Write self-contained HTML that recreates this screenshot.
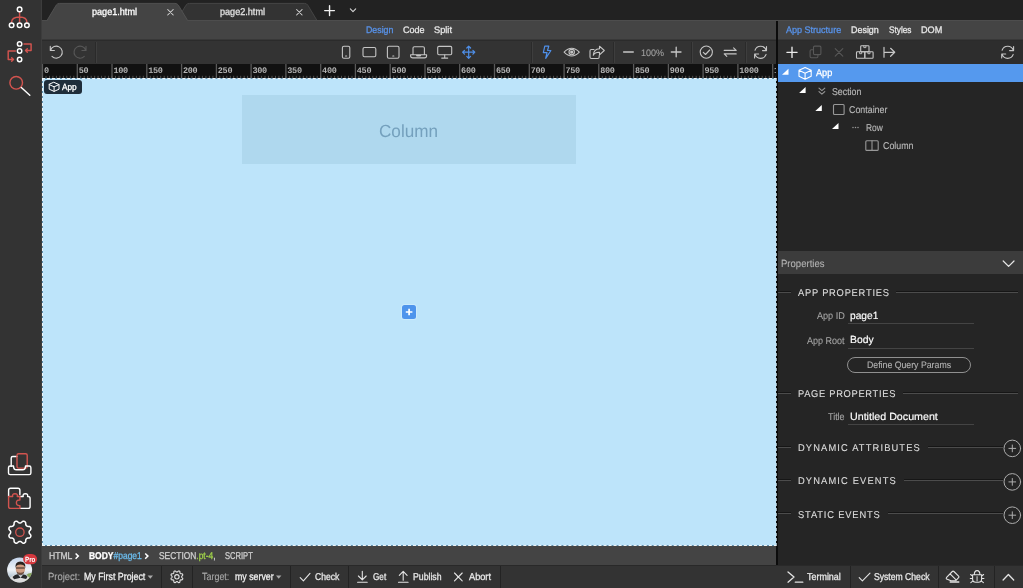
<!DOCTYPE html>
<html><head><meta charset="utf-8"><title>Wappler</title>
<style>
*{box-sizing:border-box;margin:0;padding:0}
html,body{width:1023px;height:588px;overflow:hidden;background:#333}
body{position:relative;font-family:"Liberation Sans",sans-serif;font-size:10.5px;color:#ddd;text-rendering:geometricPrecision}
.abs{position:absolute}
.t{position:absolute;white-space:nowrap;transform-origin:0 50%}
#txt{position:absolute;left:0;top:0;width:1023px;height:588px;will-change:transform}
svg{position:absolute;overflow:visible;fill:none;stroke-linecap:round;stroke-linejoin:round}
.sep{position:absolute;width:1px;background:#232323}
.sepl{position:absolute;width:2px;background:linear-gradient(90deg,#2a2a2a 50%,#3e3e3e 50%)}
#sidebar{left:0;top:0;width:42px;height:588px;background:#333;border-right:1px solid #3c3c3c}
#tabstrip{left:42px;top:0;width:981px;height:20px;background:#222}
#viewbar{left:42px;top:20px;width:734px;height:19px;background:#444}
#rviewbar{left:778px;top:20px;width:245px;height:19px;background:#444}
#darkline{left:42px;top:39px;width:981px;height:2px;background:#2b2b2b;border-top:1px solid #383838}
#toolbar{left:42px;top:41px;width:734px;height:23px;background:#333}
#rtoolbar{left:778px;top:41px;width:245px;height:23px;background:#2d2d2d}
#ruler{left:42px;top:64px;width:734px;height:14px;background:#111;overflow:hidden}
#rulern{position:absolute;left:0;top:0;width:734px;height:14px;will-change:transform}
#ruler .n{position:absolute;top:1.5px;font-family:"Liberation Mono",monospace;font-size:8.5px;line-height:10px;color:#b4b4b4;letter-spacing:-0.3px;font-weight:700}
#canvas{left:42px;top:78px;width:735px;height:468px;background:#bde4fa;border:1px solid #5f8fad}
#canvas2{left:42px;top:78px;width:735px;height:468px;border:1px dashed rgba(255,255,255,.9);border-right-color:rgba(205,228,242,.75)}
#crumbs{left:42px;top:546px;width:735px;height:19px;background:#444}
#bottombar{left:42px;top:565px;width:981px;height:23px;background:#333;border-top:1px solid #292929}
#rpanel{left:778px;top:64px;width:245px;height:501px;background:#252525}
#vsplit{left:776px;top:20px;width:2px;height:545px;background:#0c0c0c}
#selrow{left:778px;top:64px;width:245px;height:18px;background:#5599ee}
#prophead{left:778px;top:251px;width:245px;height:23px;background:#3c3c3c}
.hl{position:absolute;height:2px;background:linear-gradient(180deg,#161616 50%,#4c4c4c 50%)}
.ul{position:absolute;height:1px;background:#444}
#qbtn{left:847px;top:357px;width:124px;height:16px;border:1px solid #909090;border-radius:8px}
#appbadge{left:44px;top:80px;width:38px;height:14px;background:#1f2d3a;border-radius:3px}
#colbox{left:242px;top:95px;width:334px;height:69px;background:#afd8ee}
#plusbtn{left:402px;top:305px;width:14px;height:14px;background:#4e94ec;border-radius:2.500px;box-shadow:0 0 0 1px rgba(225,244,255,.45)}
</style></head><body>
<div class="abs" id="sidebar"></div>
<div class="abs" id="tabstrip"></div>
<div class="abs" id="viewbar"></div>
<div class="abs" id="rviewbar"></div>
<div class="abs" id="darkline"></div>
<div class="abs" id="toolbar"></div>
<div class="abs" id="rtoolbar"></div>
<div class="abs" id="ruler">
<svg width="734" height="14" viewBox="0 0 734 14" style="left:0;top:0"><line x1="0.5" y1="0" x2="0.5" y2="14" stroke="#5a5a5a" stroke-width="1.3"/><line x1="35.3" y1="0" x2="35.3" y2="14" stroke="#5a5a5a" stroke-width="1.3"/><line x1="70.0" y1="0" x2="70.0" y2="14" stroke="#5a5a5a" stroke-width="1.3"/><line x1="104.8" y1="0" x2="104.8" y2="14" stroke="#5a5a5a" stroke-width="1.3"/><line x1="139.6" y1="0" x2="139.6" y2="14" stroke="#5a5a5a" stroke-width="1.3"/><line x1="174.4" y1="0" x2="174.4" y2="14" stroke="#5a5a5a" stroke-width="1.3"/><line x1="209.1" y1="0" x2="209.1" y2="14" stroke="#5a5a5a" stroke-width="1.3"/><line x1="243.9" y1="0" x2="243.9" y2="14" stroke="#5a5a5a" stroke-width="1.3"/><line x1="278.7" y1="0" x2="278.7" y2="14" stroke="#5a5a5a" stroke-width="1.3"/><line x1="313.4" y1="0" x2="313.4" y2="14" stroke="#5a5a5a" stroke-width="1.3"/><line x1="348.2" y1="0" x2="348.2" y2="14" stroke="#5a5a5a" stroke-width="1.3"/><line x1="383.0" y1="0" x2="383.0" y2="14" stroke="#5a5a5a" stroke-width="1.3"/><line x1="417.7" y1="0" x2="417.7" y2="14" stroke="#5a5a5a" stroke-width="1.3"/><line x1="452.5" y1="0" x2="452.5" y2="14" stroke="#5a5a5a" stroke-width="1.3"/><line x1="487.3" y1="0" x2="487.3" y2="14" stroke="#5a5a5a" stroke-width="1.3"/><line x1="522.1" y1="0" x2="522.1" y2="14" stroke="#5a5a5a" stroke-width="1.3"/><line x1="556.8" y1="0" x2="556.8" y2="14" stroke="#5a5a5a" stroke-width="1.3"/><line x1="591.6" y1="0" x2="591.6" y2="14" stroke="#5a5a5a" stroke-width="1.3"/><line x1="626.4" y1="0" x2="626.4" y2="14" stroke="#5a5a5a" stroke-width="1.3"/><line x1="661.1" y1="0" x2="661.1" y2="14" stroke="#5a5a5a" stroke-width="1.3"/><line x1="695.9" y1="0" x2="695.9" y2="14" stroke="#5a5a5a" stroke-width="1.3"/><line x1="730.7" y1="0" x2="730.7" y2="14" stroke="#5a5a5a" stroke-width="1.3"/><path d="M0.5 11.8V14M4.0 11.8V14M7.5 11.8V14M10.9 11.8V14M14.4 11.8V14M17.9 11.8V14M21.4 11.8V14M24.8 11.8V14M28.3 11.8V14M31.8 11.8V14M35.3 11.8V14M38.7 11.8V14M42.2 11.8V14M45.7 11.8V14M49.2 11.8V14M52.7 11.8V14M56.1 11.8V14M59.6 11.8V14M63.1 11.8V14M66.6 11.8V14M70.0 11.8V14M73.5 11.8V14M77.0 11.8V14M80.5 11.8V14M83.9 11.8V14M87.4 11.8V14M90.9 11.8V14M94.4 11.8V14M97.9 11.8V14M101.3 11.8V14M104.8 11.8V14M108.3 11.8V14M111.8 11.8V14M115.2 11.8V14M118.7 11.8V14M122.2 11.8V14M125.7 11.8V14M129.1 11.8V14M132.6 11.8V14M136.1 11.8V14M139.6 11.8V14M143.1 11.8V14M146.5 11.8V14M150.0 11.8V14M153.5 11.8V14M157.0 11.8V14M160.4 11.8V14M163.9 11.8V14M167.4 11.8V14M170.9 11.8V14M174.4 11.8V14M177.8 11.8V14M181.3 11.8V14M184.8 11.8V14M188.3 11.8V14M191.7 11.8V14M195.2 11.8V14M198.7 11.8V14M202.2 11.8V14M205.6 11.8V14M209.1 11.8V14M212.6 11.8V14M216.1 11.8V14M219.6 11.8V14M223.0 11.8V14M226.5 11.8V14M230.0 11.8V14M233.5 11.8V14M236.9 11.8V14M240.4 11.8V14M243.9 11.8V14M247.4 11.8V14M250.8 11.8V14M254.3 11.8V14M257.8 11.8V14M261.3 11.8V14M264.8 11.8V14M268.2 11.8V14M271.7 11.8V14M275.2 11.8V14M278.7 11.8V14M282.1 11.8V14M285.6 11.8V14M289.1 11.8V14M292.6 11.8V14M296.0 11.8V14M299.5 11.8V14M303.0 11.8V14M306.5 11.8V14M310.0 11.8V14M313.4 11.8V14M316.9 11.8V14M320.4 11.8V14M323.9 11.8V14M327.3 11.8V14M330.8 11.8V14M334.3 11.8V14M337.8 11.8V14M341.2 11.8V14M344.7 11.8V14M348.2 11.8V14M351.7 11.8V14M355.2 11.8V14M358.6 11.8V14M362.1 11.8V14M365.6 11.8V14M369.1 11.8V14M372.5 11.8V14M376.0 11.8V14M379.5 11.8V14M383.0 11.8V14M386.4 11.8V14M389.9 11.8V14M393.4 11.8V14M396.9 11.8V14M400.4 11.8V14M403.8 11.8V14M407.3 11.8V14M410.8 11.8V14M414.3 11.8V14M417.7 11.8V14M421.2 11.8V14M424.7 11.8V14M428.2 11.8V14M431.6 11.8V14M435.1 11.8V14M438.6 11.8V14M442.1 11.8V14M445.6 11.8V14M449.0 11.8V14M452.5 11.8V14M456.0 11.8V14M459.5 11.8V14M462.9 11.8V14M466.4 11.8V14M469.9 11.8V14M473.4 11.8V14M476.8 11.8V14M480.3 11.8V14M483.8 11.8V14M487.3 11.8V14M490.8 11.8V14M494.2 11.8V14M497.7 11.8V14M501.2 11.8V14M504.7 11.8V14M508.1 11.8V14M511.6 11.8V14M515.1 11.8V14M518.6 11.8V14M522.1 11.8V14M525.5 11.8V14M529.0 11.8V14M532.5 11.8V14M536.0 11.8V14M539.4 11.8V14M542.9 11.8V14M546.4 11.8V14M549.9 11.8V14M553.3 11.8V14M556.8 11.8V14M560.3 11.8V14M563.8 11.8V14M567.3 11.8V14M570.7 11.8V14M574.2 11.8V14M577.7 11.8V14M581.2 11.8V14M584.6 11.8V14M588.1 11.8V14M591.6 11.8V14M595.1 11.8V14M598.5 11.8V14M602.0 11.8V14M605.5 11.8V14M609.0 11.8V14M612.5 11.8V14M615.9 11.8V14M619.4 11.8V14M622.9 11.8V14M626.4 11.8V14M629.8 11.8V14M633.3 11.8V14M636.8 11.8V14M640.3 11.8V14M643.7 11.8V14M647.2 11.8V14M650.7 11.8V14M654.2 11.8V14M657.7 11.8V14M661.1 11.8V14M664.6 11.8V14M668.1 11.8V14M671.6 11.8V14M675.0 11.8V14M678.5 11.8V14M682.0 11.8V14M685.5 11.8V14M688.9 11.8V14M692.4 11.8V14M695.9 11.8V14M699.4 11.8V14M702.9 11.8V14M706.3 11.8V14M709.8 11.8V14M713.3 11.8V14M716.8 11.8V14M720.2 11.8V14M723.7 11.8V14M727.2 11.8V14M730.7 11.8V14M734.1 11.8V14M737.6 11.8V14" stroke="#6e6e6e" stroke-width="0.7" stroke-linecap="butt"/></svg>
<div id="rulern"><div class="n" style="left:1.9px">0</div><div class="n" style="left:36.7px">50</div><div class="n" style="left:71.4px">100</div><div class="n" style="left:106.2px">150</div><div class="n" style="left:141.0px">200</div><div class="n" style="left:175.8px">250</div><div class="n" style="left:210.5px">300</div><div class="n" style="left:245.3px">350</div><div class="n" style="left:280.1px">400</div><div class="n" style="left:314.8px">450</div><div class="n" style="left:349.6px">500</div><div class="n" style="left:384.4px">550</div><div class="n" style="left:419.1px">600</div><div class="n" style="left:453.9px">650</div><div class="n" style="left:488.7px">700</div><div class="n" style="left:523.5px">750</div><div class="n" style="left:558.2px">800</div><div class="n" style="left:593.0px">850</div><div class="n" style="left:627.8px">900</div><div class="n" style="left:662.5px">950</div><div class="n" style="left:697.3px">1000</div><div class="n" style="left:732.1px">1050</div></div>
</div>
<div class="abs" id="canvas"></div>
<div class="abs" id="appbadge"></div>
<div class="abs" id="colbox"></div>
<div class="abs" id="plusbtn"></div>
<div class="abs" id="crumbs"></div>
<div class="abs" id="rpanel"></div>
<div class="abs" id="selrow"></div>
<div class="abs" id="prophead"></div>
<div class="abs" id="bottombar"></div>
<div class="abs" id="vsplit"></div>
<div class="abs" id="canvas2"></div>
<!-- toolbar separators -->
<div class="sepl" style="left:95px;top:42px;height:21px"></div>
<div class="sepl" style="left:531px;top:42px;height:21px"></div>
<div class="sepl" style="left:613px;top:42px;height:21px"></div>
<div class="sepl" style="left:691px;top:42px;height:21px"></div>
<div class="sepl" style="left:745px;top:42px;height:21px"></div>
<!-- bottom separators -->
<div class="sep" style="left:161px;top:566px;height:22px"></div>
<div class="sep" style="left:192px;top:566px;height:22px"></div>
<div class="sep" style="left:290px;top:566px;height:22px"></div>
<div class="sep" style="left:348px;top:566px;height:22px"></div>
<div class="sep" style="left:500px;top:566px;height:22px"></div>
<div class="sep" style="left:850px;top:566px;height:22px"></div>
<div class="sep" style="left:938px;top:566px;height:22px"></div>
<div class="sep" style="left:994px;top:566px;height:22px"></div>
<!-- property section lines -->
<div class="hl" style="left:778px;top:291px;width:13px"></div><div class="hl" style="left:896px;top:291px;width:122px"></div>
<div class="hl" style="left:778px;top:392px;width:13px"></div><div class="hl" style="left:903px;top:392px;width:115px"></div>
<div class="hl" style="left:778px;top:446px;width:13px"></div><div class="hl" style="left:928px;top:446px;width:75px"></div>
<div class="hl" style="left:778px;top:479px;width:13px"></div><div class="hl" style="left:904px;top:479px;width:99px"></div>
<div class="hl" style="left:778px;top:512px;width:13px"></div><div class="hl" style="left:888px;top:512px;width:115px"></div>
<div class="ul" style="left:848px;top:323px;width:126px"></div>
<div class="ul" style="left:848px;top:348px;width:126px"></div>
<div class="ul" style="left:848px;top:424px;width:126px"></div>
<div class="abs" id="qbtn"></div>
<svg width="1023" height="588" viewBox="0 0 1023 588" style="left:0;top:0">
<!-- tabs -->
<path d="M176.500 20.500L186 5.200Q187.200 3.400 189.500 3.400H304.500Q306.800 3.400 307.800 5.200L317 20.500" fill="#333" stroke="#484848" stroke-width="0.900"/>
<path d="M47 20.500L56.200 5.200Q57.300 3.400 59.600 3.400H175Q177.300 3.400 178.400 5.200L187.600 20.500" fill="#444" stroke="#555" stroke-width="0.900"/>
<rect x="42" y="20" width="981" height="1" fill="#4d4d4d"/><rect x="47.600" y="20" width="139.500" height="1" fill="#444"/>
<g stroke="#d8d8d8" stroke-width="1.050">
<path d="M167.700 9.500l5.500 5.500m0-5.500l-5.500 5.500"/>
<path d="M296.600 9.500l5.500 5.500m0-5.500l-5.500 5.500"/>
<path d="M350.300 8.900l2.700 2.700 2.700-2.700"/>
</g>
<path d="M324.700 10.600h9.700m-4.850-4.850v9.700" stroke="#f0f0f0" stroke-width="1.400"/>

<!-- sidebar icons -->
<g stroke-width="1.450">
 <g stroke="#d2544f">
  <path d="M19.6 12v10M11.6 22.3Q11.6 17 19.6 17Q26.9 17 26.9 22.3"/>
  <path d="M24 43.9h7.1v6.6h-5.6m1.8-1.8l-1.8 1.8 1.8 1.8"/>
  <path d="M15.3 51h-7.1v8.5h5.3m-1.8-1.8l1.8 1.8-1.8 1.8"/>
  <circle cx="16.2" cy="82.8" r="6.3"/>
 </g>
 <g stroke="#fff">
  <circle cx="19.6" cy="9.4" r="2.3"/><circle cx="11.6" cy="25.2" r="2.3"/><circle cx="19.6" cy="25.2" r="2.3"/><circle cx="26.9" cy="25.2" r="2.3"/>
  <circle cx="19.6" cy="43.9" r="2.2"/><circle cx="19.6" cy="51" r="2.2"/><circle cx="19.6" cy="59.5" r="2.2"/>
  <path d="M21.3 87.5l8.5 7.7"/>
 </g>
</g>

<!-- toolbar icons -->
<g stroke="#c6c6c6" stroke-width="1.1">
 <path d="M50.3 46.4v4.1h4.1M50.6 50.2A6 6 0 1 1 52 56.4"/>
 <rect x="342.4" y="46.2" width="7.4" height="12" rx="1.5"/><path d="M345.6 56h1" stroke-width="1.2"/>
 <rect x="363" y="47.5" width="12.8" height="9.2" rx="1.5"/>
 <rect x="387.4" y="46.2" width="11.6" height="12" rx="1.5"/><path d="M392.8 56h1" stroke-width="1.2"/>
 <path d="M413 54.6V48.1q0-1.4 1.4-1.4h8.6q1.4 0 1.4 1.4v6.5M410.6 54.7h16v1q0 2.2-2.2 2.2h-11.6q-2.2 0-2.2-2.200zM416.5 54.9q0 1 1 1h2.200q1 0 1-1"/>
 <rect x="437.7" y="46.4" width="14" height="8.400" rx="1.2"/><path d="M444.700 55v2.600M441.700 58.100h6"/>
 <path d="M564.100 52.100Q571.700 44.300 579.300 52.100Q571.700 59.900 564.100 52.100Z"/><circle cx="571.700" cy="52.100" r="2.700"/><circle cx="571.700" cy="52.100" r="1" fill="#cfcfcf"/>
 <path d="M594 49.500h-2.600q-1.400 0-1.400 1.400v6.200q0 1.400 1.400 1.400h6.400q1.400 0 1.400-1.400v-1.600"/>
 <path d="M599.500 46.200l4.800 4.300-4.800 4.300v-2.600q-4.600-.2-6.200 3 .2-6.200 6.200-6.500z"/>
 <path d="M623.600 52h9.700M671.300 52h9.700M676.200 47.200v9.600" stroke-width="1.300"/>
 <circle cx="706.300" cy="52.100" r="6.100"/><path d="M703.300 52.300l2.200 2.200 4.200-4.500"/>
 <path d="M724.200 50.400h12l-2.600-2.500M736.200 53.900h-12l2.600 2.500"/>
 <path d="M766.500 46.600v4h-4M766.200 50.400A5.900 5.900 0 0 0 755 50.200M754.600 58v-4h4M754.900 54.200A5.900 5.900 0 0 0 766.100 54.400"/>
 <path d="M1013.600 46.600v4h-4M1013.300 50.400A5.900 5.900 0 0 0 1002.100 50.200M1001.700 58v-4h4M1002 54.200A5.900 5.900 0 0 0 1013.200 54.400"/>
 <rect x="856.500" y="51.800" width="8.300" height="6.500" rx="0.800"/><rect x="864.800" y="51.800" width="8.300" height="6.500" rx="0.800"/><rect x="860.700" y="45.700" width="8.300" height="6.100" rx="0.800"/>
 <path d="M863.800 45.900v1.700h2.100v-1.700M859.600 52v1.700h2.100v-1.700M867.900 52v1.700h2.100v-1.700" stroke-width="0.900"/>
 <path d="M884 47.400v9.800M885 52.300h9.600M890.600 48.300l4.100 4-4.100 4" stroke-width="1.200"/>
</g>
<path d="M786.900 52.300h10.200M792 47.200v10.200" stroke="#ececec" stroke-width="1.350"/>
<g stroke="#585858" stroke-width="1.100">
 <path d="M86 46.400v4.100h-4.100M85.700 50.200A6 6 0 1 0 84.300 56.400"/>
 <path d="M813.300 49.700h-2q-1.200 0-1.200 1.200v5.600q0 1.200 1.200 1.200h5.400q1.200 0 1.200-1.200v-1.700"/>
 <rect x="813.500" y="46.100" width="7.400" height="8.500" rx="1.200"/>
 <path d="M835.200 48.600l7.600 7.600M842.800 48.600l-7.600 7.600"/>
</g>
<g stroke="#4f90ea" stroke-width="1.200">
 <path d="M468.700 46.200v12M462.700 52.200h12M466.800 48l1.900-1.900 1.900 1.900M466.800 56.400l1.900 1.900 1.900-1.900M464.500 50.300l-1.900 1.900 1.900 1.900M472.900 50.300l1.900 1.900-1.900 1.900"/>
 <path d="M544.800 46.200h4l-1.300 4.300h3.400l-5.200 7.800 1.300-5.700h-3.700z"/>
</g>

<!-- tree -->
<g fill="#fff" stroke="none">
 <path d="M788.500 68.700v6.100h-6.500z"/><path d="M805.600 87v6.100h-6.500z"/><path d="M821.800 105v6.100h-6.500z"/><path d="M838.500 123v6.100h-6.500z"/>
</g>
<g stroke="#fff" stroke-width="1.100">
 <path d="M805.100 67.400l6.100 2.900v6l-6.100 2.900-6.100-2.900v-6zM799 70.300l6.100 2.900 6.100-2.900M805.100 73.200v6"/>
 <path d="M54.100 82.400l4.900 2.200v4.600l-4.900 2.200-4.900-2.200v-4.600zM49.200 84.600l4.900 2.200 4.900-2.200M54.100 86.800v4.600" stroke-width="1"/>
</g>
<g stroke="#989898" stroke-width="1.100">
 <path d="M819 88.100l2.900 2.600 2.900-2.600M819 91.600l2.900 2.600 2.900-2.600"/>
 <rect x="833.500" y="104.500" width="10.600" height="10" rx="1"/>
 <rect x="865.800" y="140.800" width="12.400" height="9.600" rx="1"/><path d="M872 140.800v9.600"/>
</g>
<g fill="#999" stroke="none"><circle cx="853" cy="127.600" r="0.750"/><circle cx="855.500" cy="127.600" r="0.750"/><circle cx="858" cy="127.600" r="0.750"/></g>
<!-- properties -->
<path d="M1003.200 261l5.400 5.400 5.400-5.400" stroke="#e8e8e8" stroke-width="1.200"/>
<g stroke="#adadad" stroke-width="1">
 <circle cx="1012.300" cy="448.400" r="8.300"/><path d="M1008.900 448.400h6.800M1012.300 445v6.800"/>
 <circle cx="1012.300" cy="481.900" r="8.300"/><path d="M1008.900 481.900h6.800M1012.300 478.500v6.800"/>
 <circle cx="1012.300" cy="515.200" r="8.300"/><path d="M1008.900 515.200h6.800M1012.300 511.800v6.800"/>
</g>
<!-- plus button -->
<path d="M405.800 312h6.600M409.100 308.700v6.600" stroke="#fff" stroke-width="1.700" stroke-linecap="butt"/>
<!-- crumbs chevrons -->
<path d="M75.600 553.500l2.700 2.600-2.700 2.600M145.200 553.500l2.700 2.600-2.700 2.600" stroke="#fff" stroke-width="1.500" stroke-linecap="butt" stroke-linejoin="miter"/>
<!-- bottom bar -->
<g fill="#aaa" stroke="none"><path d="M147.600 575.500h5.400l-2.700 3.200z"/><path d="M276 575.500h5.400l-2.700 3.200z"/></g>
<g stroke="#e4e4e4" stroke-width="1.100">
 <path d="M181.65 576.80L181.68 577.03L181.77 577.28L181.92 577.55L182.29 577.87L182.64 578.24L182.75 578.57L182.75 578.89L182.67 579.19L182.52 579.46L182.29 579.68L181.98 579.84L181.47 579.86L180.98 579.83L180.68 579.90L180.45 580.01L180.26 580.16L180.11 580.35L180.00 580.58L179.93 580.88L179.96 581.37L179.94 581.88L179.78 582.19L179.56 582.42L179.29 582.57L178.99 582.65L178.67 582.65L178.34 582.54L177.97 582.19L177.65 581.82L177.38 581.67L177.13 581.58L176.90 581.55L176.67 581.58L176.42 581.67L176.15 581.82L175.83 582.19L175.46 582.54L175.13 582.65L174.81 582.65L174.51 582.57L174.24 582.42L174.02 582.19L173.86 581.88L173.84 581.37L173.87 580.88L173.80 580.58L173.69 580.35L173.54 580.16L173.35 580.01L173.12 579.90L172.82 579.83L172.33 579.86L171.82 579.84L171.51 579.68L171.28 579.46L171.13 579.19L171.05 578.89L171.05 578.57L171.16 578.24L171.51 577.87L171.88 577.55L172.03 577.28L172.12 577.03L172.15 576.80L172.12 576.57L172.03 576.32L171.88 576.05L171.51 575.73L171.16 575.36L171.05 575.03L171.05 574.71L171.13 574.41L171.28 574.14L171.51 573.92L171.82 573.76L172.33 573.74L172.82 573.77L173.12 573.70L173.35 573.59L173.54 573.44L173.69 573.25L173.80 573.02L173.87 572.72L173.84 572.23L173.86 571.72L174.02 571.41L174.24 571.18L174.51 571.03L174.81 570.95L175.13 570.95L175.46 571.06L175.83 571.41L176.15 571.78L176.42 571.93L176.67 572.02L176.90 572.05L177.13 572.02L177.38 571.93L177.65 571.78L177.97 571.41L178.34 571.06L178.67 570.95L178.99 570.95L179.29 571.03L179.56 571.18L179.78 571.41L179.94 571.72L179.96 572.23L179.93 572.72L180.00 573.02L180.11 573.25L180.26 573.44L180.45 573.59L180.68 573.70L180.98 573.77L181.47 573.74L181.98 573.76L182.29 573.92L182.52 574.14L182.67 574.41L182.75 574.71L182.75 575.03L182.64 575.36L182.29 575.73L181.92 576.05L181.77 576.32L181.68 576.57Z"/><circle cx="176.900" cy="576.800" r="2.200"/>
 <path d="M300.200 577.600l3.200 3.200 6.600-7.400"/>
 <path d="M362.300 571.300v8.400M358.400 576l3.900 3.900 3.900-3.900M357.600 582.300h9.600"/>
 <path d="M403.200 580.200v-8.400M399.300 575.300l3.900-3.900 3.900 3.900M398.500 582.300h9.600"/>
 <path d="M454.500 573l7.700 7.800M462.200 573l-7.700 7.800"/>
 <path d="M788 572l6 5.100-6 5.100M795.300 582.200h7.500" stroke-width="1.300"/>
 <path d="M859.200 577.600l3.200 3.200 7.600-7.700"/>
 <path d="M1003.100 580l5.300-5.500 5.300 5.500" stroke-width="1.300"/>
 <path d="M950.200 582h8.600" stroke-width="1.400"/><path d="M946.600 577.400l5.700-5.900q.8-.8 1.600 0l4.700 4.600q.8.800 0 1.600l-3 3.100h-4.600l-4.400-1.800q-.8-.8 0-1.600zM950.100 573.900l6 5.900"/>
 <path d="M972.600 574.700h9v4.300q0 3.300-3.300 3.300h-2.400q-3.300 0-3.300-3.300zM974.300 574.700q0-4.100 2.800-4.100t2.800 4.100M972.600 576.200l-2-1.700M972.600 578.500h-2.300M973 580.900l-2.200 1.700M981.600 576.200l2-1.700M981.600 578.500h2.300M981.200 580.900l2.200 1.700"/><path d="M977.100 576.200v5.300" stroke="#9a9a9a" stroke-width="1.600" stroke-linecap="butt"/>
</g>
<!-- sidebar bottom -->
<g stroke-width="1.400">
 <path d="M17 456.500h-4.200q-1.600 0-1.600 1.600v8.300" stroke="#fff"/>
 <rect x="17" y="453.700" width="10.200" height="14.400" rx="1.600" stroke="#d2544f"/>
 <path d="M13.500 466h-3.300q-1.700 0-1.700 1.700v5.200q0 1.700 1.700 1.700h19q1.700 0 1.700-1.700v-5.200q0-1.700-1.700-1.700h-3.200M13.500 466q0 3.800 3 3.800h6q3 0 3-3.800" stroke="#fff"/>
 <path d="M8.600 496.500V490.200Q8.600 488.200 10.600 488.200H17.900Q19.900 488.200 19.900 490.200V494.500" stroke="#fff"/>
 <path d="M19.900 508.400H28.100Q30.100 508.400 30.100 506.400V498.500Q30.100 496.500 28.100 496.500H27.600Q28.300 493.700 25.400 493.700Q22.500 493.700 23.200 496.500H19.900" stroke="#fff"/>
 <path d="M8.600 496.500V506.400Q8.600 508.400 10.600 508.400H19.900V505.600Q16.400 505.900 16.400 502.800Q16.400 499.700 19.900 500V496.500H17.300Q18 493.700 15 493.700Q12 493.700 12.700 496.500Z" stroke="#d2544f"/>
 <path d="M29.10 532.20L29.15 532.65L29.29 533.12L29.54 533.63L30.15 534.24L30.72 534.91L30.87 535.53L30.86 536.12L30.71 536.68L30.42 537.18L30.01 537.60L29.47 537.93L28.59 538.01L27.73 538.01L27.19 538.19L26.76 538.42L26.41 538.71L26.12 539.06L25.89 539.49L25.71 540.03L25.71 540.89L25.63 541.77L25.30 542.31L24.88 542.72L24.38 543.01L23.82 543.16L23.23 543.17L22.61 543.02L21.94 542.45L21.33 541.84L20.82 541.59L20.35 541.45L19.90 541.40L19.45 541.45L18.98 541.59L18.47 541.84L17.86 542.45L17.19 543.02L16.57 543.17L15.98 543.16L15.42 543.01L14.92 542.72L14.50 542.31L14.17 541.77L14.09 540.89L14.09 540.03L13.91 539.49L13.68 539.06L13.39 538.71L13.04 538.42L12.61 538.19L12.07 538.01L11.21 538.01L10.33 537.93L9.79 537.60L9.38 537.18L9.09 536.68L8.94 536.12L8.93 535.53L9.08 534.91L9.65 534.24L10.26 533.63L10.51 533.12L10.65 532.65L10.70 532.20L10.65 531.75L10.51 531.28L10.26 530.77L9.65 530.16L9.08 529.49L8.93 528.87L8.94 528.28L9.09 527.72L9.38 527.22L9.79 526.80L10.33 526.47L11.21 526.39L12.07 526.39L12.61 526.21L13.04 525.98L13.39 525.69L13.68 525.34L13.91 524.91L14.09 524.37L14.09 523.51L14.17 522.63L14.50 522.09L14.92 521.68L15.42 521.39L15.98 521.24L16.57 521.23L17.19 521.38L17.86 521.95L18.47 522.56L18.98 522.81L19.45 522.95L19.90 523.00L20.35 522.95L20.82 522.81L21.33 522.56L21.94 521.95L22.61 521.38L23.23 521.23L23.82 521.24L24.38 521.39L24.88 521.68L25.30 522.09L25.63 522.63L25.71 523.51L25.71 524.37L25.89 524.91L26.12 525.34L26.41 525.69L26.76 525.98L27.19 526.21L27.73 526.39L28.59 526.39L29.47 526.47L30.01 526.80L30.42 527.22L30.71 527.72L30.86 528.28L30.87 528.87L30.72 529.49L30.15 530.16L29.54 530.77L29.29 531.28L29.15 531.75Z" stroke="#fff" stroke-width="1.500"/>
 <circle cx="19.900" cy="532.200" r="4.200" stroke="#d2544f" stroke-width="1.300"/>
</g>

<!-- avatar -->
<defs><clipPath id="avc"><circle cx="19.600" cy="570" r="12.500"/></clipPath>
<linearGradient id="sky" x1="0" y1="0" x2="0" y2="1"><stop offset="0" stop-color="#c3d4ec"/><stop offset="0.500" stop-color="#eef2f6"/><stop offset="0.750" stop-color="#b8c8d4"/><stop offset="1" stop-color="#a9b4b8"/></linearGradient></defs>
<g clip-path="url(#avc)" stroke="none">
 <rect x="6" y="557" width="28" height="26" fill="url(#sky)"/>
 <path d="M25 576q4-4 9-3v10h-9z" fill="#86a35a"/>
 <path d="M8 583q1-7.500 8-8.200l4.500 1.200 4.500-1.200q5 .7 5.500 8.200z" fill="#dcdcdc"/>
 <path d="M12.500 577q3-3 5.500-2.600l2.600 3.400 2.600-3.400q2.500-.2 4.300 2.400l-1.400 2.200-5.500-1.200-6.500 1.400z" fill="#26282b"/>
 <ellipse cx="20.400" cy="569" rx="4.700" ry="5.600" fill="#cf9c82"/>
 <path d="M15.500 568q-.8-6.300 4.900-6.500 5.700.2 4.900 6.500-.9-3.400-4.900-3.400-4 0-4.900 3.400z" fill="#2a221e"/>
 <path d="M16.600 571.500q3.800 2.600 7.600 0-.4 3.600-3.800 3.800-3.400-.2-3.800-3.800z" fill="#4e372c" opacity=".75"/>
 <path d="M16.400 568h8" stroke="#30241f" stroke-width="1"/>
</g>
<rect x="23.100" y="553.900" width="14" height="10.400" rx="5.200" fill="#d5383e" stroke="none"/>
</svg>

<div id="txt">
<div class="t" style="left:91.5px;top:7.2px;font-size:9.92px;line-height:11.90px;color:#fff;-webkit-text-stroke:0.3px;transform:scaleX(0.918)">page1.html</div>
<div class="t" style="left:220.0px;top:7.2px;font-size:9.92px;line-height:11.90px;color:#e0e0e0;-webkit-text-stroke:0.3px;transform:scaleX(0.918)">page2.html</div>
<div class="t" style="left:365.6px;top:25.2px;font-size:9.45px;line-height:11.34px;color:#5892e8;-webkit-text-stroke:0.3px;transform:scaleX(0.932)">Design</div>
<div class="t" style="left:402.7px;top:25.2px;font-size:9.45px;line-height:11.34px;color:#e6e6e6;-webkit-text-stroke:0.3px;transform:scaleX(0.957)">Code</div>
<div class="t" style="left:433.7px;top:25.2px;font-size:9.45px;line-height:11.34px;color:#e6e6e6;-webkit-text-stroke:0.3px;transform:scaleX(0.980)">Split</div>
<div class="t" style="left:641.4px;top:47.8px;font-size:9.45px;line-height:11.34px;color:#a0a0a0;-webkit-text-stroke:0.1px;transform:scaleX(0.953)">100%</div>
<div class="t" style="left:786.3px;top:25.2px;font-size:9.45px;line-height:11.34px;color:#5892e8;-webkit-text-stroke:0.3px;transform:scaleX(0.956)">App Structure</div>
<div class="t" style="left:851.0px;top:25.2px;font-size:9.45px;line-height:11.34px;color:#e6e6e6;-webkit-text-stroke:0.3px;transform:scaleX(0.946)">Design</div>
<div class="t" style="left:888.6px;top:25.2px;font-size:9.45px;line-height:11.34px;color:#e6e6e6;-webkit-text-stroke:0.3px;transform:scaleX(0.871)">Styles</div>
<div class="t" style="left:920.7px;top:25.2px;font-size:9.45px;line-height:11.34px;color:#e6e6e6;-webkit-text-stroke:0.3px;transform:scaleX(0.967)">DOM</div>
<div class="t" style="left:815.7px;top:68.3px;font-size:9.92px;line-height:11.90px;color:#fff;-webkit-text-stroke:0.3px;transform:scaleX(0.924)">App</div>
<div class="t" style="left:832.3px;top:86.5px;font-size:9.92px;line-height:11.90px;color:#b6b6b6;-webkit-text-stroke:0.15px;transform:scaleX(0.887)">Section</div>
<div class="t" style="left:849.2px;top:104.6px;font-size:9.92px;line-height:11.90px;color:#b6b6b6;-webkit-text-stroke:0.15px;transform:scaleX(0.894)">Container</div>
<div class="t" style="left:865.9px;top:122.6px;font-size:9.92px;line-height:11.90px;color:#b6b6b6;-webkit-text-stroke:0.15px;transform:scaleX(0.847)">Row</div>
<div class="t" style="left:882.7px;top:140.7px;font-size:9.92px;line-height:11.90px;color:#b6b6b6;-webkit-text-stroke:0.15px;transform:scaleX(0.893)">Column</div>
<div class="t" style="left:780.9px;top:258.7px;font-size:10.39px;line-height:12.47px;color:#b4b4b4;-webkit-text-stroke:0.1px;transform:scaleX(0.920)">Properties</div>
<div class="t" style="left:798.0px;top:288.2px;font-size:9.92px;line-height:11.90px;color:#dcdcdc;letter-spacing:0.82px;-webkit-text-stroke:0.12px;transform:scaleX(0.940)">APP PROPERTIES</div>
<div class="t" style="left:817.0px;top:311.1px;font-size:9.92px;line-height:11.90px;color:#a4a4a4;-webkit-text-stroke:0.1px;transform:scaleX(0.918)">App ID</div>
<div class="t" style="left:849.7px;top:311.0px;font-size:10.39px;line-height:12.47px;color:#fff;-webkit-text-stroke:0.15px;transform:scaleX(0.981)">page1</div>
<div class="t" style="left:807.3px;top:335.8px;font-size:9.92px;line-height:11.90px;color:#a4a4a4;-webkit-text-stroke:0.1px;transform:scaleX(0.908)">App Root</div>
<div class="t" style="left:849.7px;top:335.1px;font-size:10.39px;line-height:12.47px;color:#fff;-webkit-text-stroke:0.15px;transform:scaleX(1.002)">Body</div>
<div class="t" style="left:867.0px;top:360.4px;font-size:9.45px;line-height:11.34px;color:#b4b4b4;-webkit-text-stroke:0.1px;transform:scaleX(0.926)">Define Query Params</div>
<div class="t" style="left:798.3px;top:388.8px;font-size:9.92px;line-height:11.90px;color:#dcdcdc;letter-spacing:0.74px;-webkit-text-stroke:0.12px;transform:scaleX(0.940)">PAGE PROPERTIES</div>
<div class="t" style="left:827.7px;top:412.0px;font-size:9.92px;line-height:11.90px;color:#a4a4a4;-webkit-text-stroke:0.1px;transform:scaleX(0.904)">Title</div>
<div class="t" style="left:849.6px;top:412.2px;font-size:10.39px;line-height:12.47px;color:#fff;-webkit-text-stroke:0.15px;transform:scaleX(1.029)">Untitled Document</div>
<div class="t" style="left:798.3px;top:442.6px;font-size:9.92px;line-height:11.90px;color:#dcdcdc;letter-spacing:1.22px;-webkit-text-stroke:0.12px;transform:scaleX(0.940)">DYNAMIC ATTRIBUTES</div>
<div class="t" style="left:798.3px;top:476.1px;font-size:9.92px;line-height:11.90px;color:#dcdcdc;letter-spacing:1.22px;-webkit-text-stroke:0.12px;transform:scaleX(0.940)">DYNAMIC EVENTS</div>
<div class="t" style="left:798.3px;top:509.7px;font-size:9.92px;line-height:11.90px;color:#dcdcdc;letter-spacing:0.9px;-webkit-text-stroke:0.12px;transform:scaleX(0.940)">STATIC EVENTS</div>
<div class="t" style="left:61.6px;top:82.3px;font-size:8.98px;line-height:10.78px;color:#fff;-webkit-text-stroke:0.3px;transform:scaleX(0.921)">App</div>
<div class="t" style="left:379.3px;top:120.6px;font-size:17.5px;line-height:21.00px;color:#74a0bd;transform:scaleX(0.978)">Column</div>
<div class="t" style="left:48.6px;top:550.5px;font-size:9.92px;line-height:11.90px;color:#d0d0d0;-webkit-text-stroke:0.3px;transform:scaleX(0.868)">HTML</div>
<div class="t" style="left:89.4px;top:550.5px;font-size:9.92px;line-height:11.90px;color:#fff;-webkit-text-stroke:0.3px;transform:scaleX(0.856)"><span style="color:#fff;font-weight:700">BODY</span><span style="color:#6cbdee;font-weight:400">#page1</span></div>
<div class="t" style="left:159.0px;top:550.5px;font-size:9.92px;line-height:11.90px;color:#d0d0d0;-webkit-text-stroke:0.3px;transform:scaleX(0.848)"><span style="color:#d0d0d0;font-weight:400">SECTION</span><span style="color:#9fd04a;font-weight:400">.pt-4</span><span style="color:#d0d0d0;font-weight:400">,</span></div>
<div class="t" style="left:225.0px;top:550.5px;font-size:9.92px;line-height:11.90px;color:#d0d0d0;-webkit-text-stroke:0.3px;transform:scaleX(0.765)">SCRIPT</div>
<div class="t" style="left:47.5px;top:572.2px;font-size:10.39px;line-height:12.47px;color:#aaa;-webkit-text-stroke:0.1px;transform:scaleX(0.912)">Project:</div>
<div class="t" style="left:83.5px;top:572.2px;font-size:10.39px;line-height:12.47px;color:#f0f0f0;-webkit-text-stroke:0.3px;transform:scaleX(0.851)">My First Project</div>
<div class="t" style="left:202.0px;top:572.2px;font-size:10.39px;line-height:12.47px;color:#aaa;-webkit-text-stroke:0.1px;transform:scaleX(0.861)">Target:</div>
<div class="t" style="left:234.6px;top:572.2px;font-size:10.39px;line-height:12.47px;color:#f0f0f0;-webkit-text-stroke:0.3px;transform:scaleX(0.850)">my server</div>
<div class="t" style="left:315.2px;top:572.4px;font-size:9.92px;line-height:11.90px;color:#e8e8e8;-webkit-text-stroke:0.3px;transform:scaleX(0.865)">Check</div>
<div class="t" style="left:373.3px;top:572.4px;font-size:9.92px;line-height:11.90px;color:#e8e8e8;-webkit-text-stroke:0.3px;transform:scaleX(0.827)">Get</div>
<div class="t" style="left:413.4px;top:572.4px;font-size:9.92px;line-height:11.90px;color:#e8e8e8;-webkit-text-stroke:0.3px;transform:scaleX(0.877)">Publish</div>
<div class="t" style="left:468.6px;top:572.4px;font-size:9.92px;line-height:11.90px;color:#e8e8e8;-webkit-text-stroke:0.3px;transform:scaleX(0.929)">Abort</div>
<div class="t" style="left:807.0px;top:572.4px;font-size:9.92px;line-height:11.90px;color:#e8e8e8;-webkit-text-stroke:0.3px;transform:scaleX(0.903)">Terminal</div>
<div class="t" style="left:873.7px;top:572.4px;font-size:9.92px;line-height:11.90px;color:#e8e8e8;-webkit-text-stroke:0.3px;transform:scaleX(0.869)">System Check</div>
<div class="t" style="left:24.9px;top:555.4px;font-size:7.5px;line-height:9.00px;color:#fff;font-weight:700;transform:scaleX(0.831)">Pro</div>
</div>

</body></html>
